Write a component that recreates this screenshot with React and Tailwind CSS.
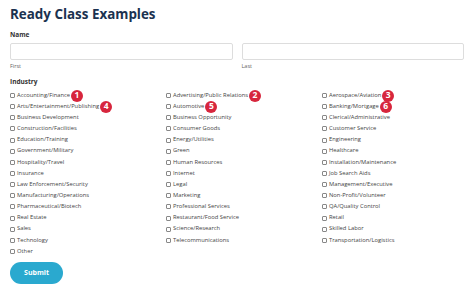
import React from "react";

const col1 = [
  ["Accounting/Finance", 1],
  ["Arts/Entertainment/Publishing", 4],
  ["Business Development"],
  ["Construction/Facilities"],
  ["Education/Training"],
  ["Government/Military"],
  ["Hospitality/Travel"],
  ["Insurance"],
  ["Law Enforcement/Security"],
  ["Manufacturing/Operations"],
  ["Pharmaceutical/Biotech"],
  ["Real Estate"],
  ["Sales"],
  ["Technology"],
  ["Other"],
];

const col2 = [
  ["Advertising/Public Relations", 2],
  ["Automotive", 5],
  ["Business Opportunity"],
  ["Consumer Goods"],
  ["Energy/Utilities"],
  ["Green"],
  ["Human Resources"],
  ["Internet"],
  ["Legal"],
  ["Marketing"],
  ["Professional Services"],
  ["Restaurant/Food Service"],
  ["Science/Research"],
  ["Telecommunications"],
];

const col3 = [
  ["Aerospace/Aviation", 3],
  ["Banking/Mortgage", 6],
  ["Clerical/Administrative"],
  ["Customer Service"],
  ["Engineering"],
  ["Healthcare"],
  ["Installation/Maintenance"],
  ["Job Search Aids"],
  ["Management/Executive"],
  ["Non-Profit/Volunteer"],
  ["QA/Quality Control"],
  ["Retail"],
  ["Skilled Labor"],
  ["Transportation/Logistics"],
];

function Item({ label, badge }) {
  return (
    <div className="h-[11.15px] flex items-center gap-[2px]">
      <span className="w-[5px] h-[5px] border-[0.5px] border-[#888] rounded-[1px] shrink-0" />
      <span className="relative text-[5.8px] text-[#444] leading-none whitespace-nowrap">
        {label}
        {badge && (
          <span className="absolute left-full top-1/2 -translate-y-1/2 ml-[1px] w-[12px] h-[12px] rounded-full bg-[#d7263d] text-white text-[8.5px] font-bold flex items-center justify-center">
            {badge}
          </span>
        )}
      </span>
    </div>
  );
}

function Column({ items }) {
  return (
    <div className="flex flex-col">
      {items.map(([label, badge]) => (
        <Item key={label} label={label} badge={badge} />
      ))}
    </div>
  );
}

export default function App() {
  return (
    <div className="w-[474px] h-[293px] bg-white px-[10px] pt-[4px] overflow-hidden antialiased" style={{ fontFamily: "'Open Sans', sans-serif" }}>
      <h1 className="text-[13.4px] font-bold text-[#1b3250] leading-[20px]">Ready Class Examples</h1>

      <div className="mt-[7px] text-[6.5px] font-bold text-[#333] leading-[8px]">Name</div>
      <div className="mt-[4px] grid grid-cols-2 gap-[9px]">
        <div>
          <div className="h-[17px] border border-[#ddd] rounded-[2px]" />
          <div className="mt-[3px] text-[5.5px] text-[#666] leading-[7px]">First</div>
        </div>
        <div>
          <div className="h-[17px] border border-[#ddd] rounded-[2px]" />
          <div className="mt-[3px] text-[5.5px] text-[#666] leading-[7px]">Last</div>
        </div>
      </div>

      <div className="mt-[8px] text-[6.5px] font-bold text-[#333] leading-[8px]">Industry</div>
      <div className="mt-[4px] grid grid-cols-[156px_156px_1fr]">
        <Column items={col1} />
        <Column items={col2} />
        <Column items={col3} />
      </div>

      <button className="mt-[5px] w-[53px] h-[22px] rounded-full bg-[#2aa9cf] text-white text-[7px] font-bold">
        Submit
      </button>
    </div>
  );
}
